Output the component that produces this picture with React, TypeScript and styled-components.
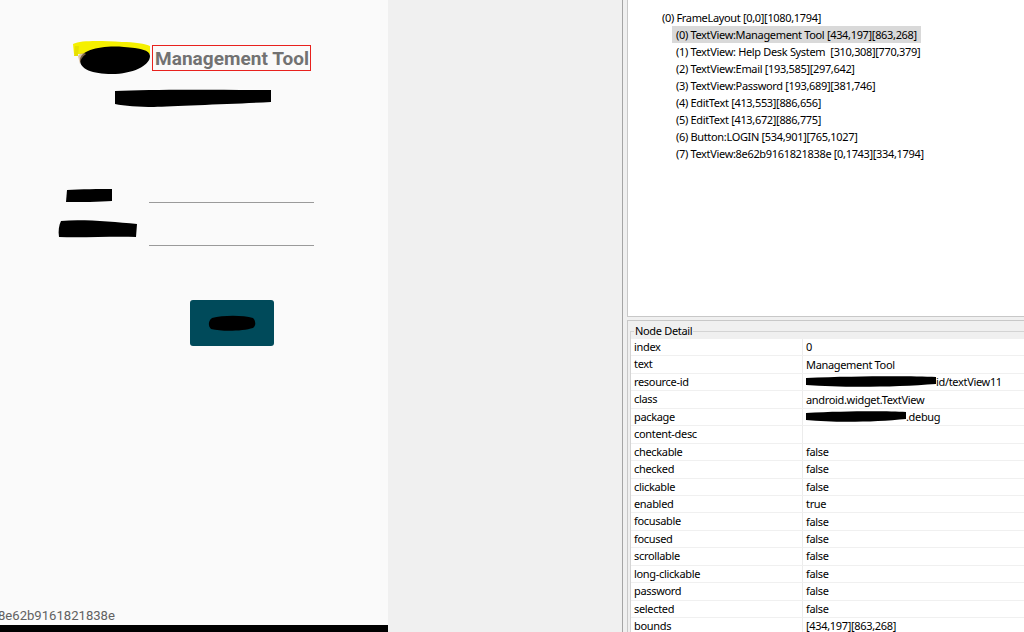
import React from "react";
import styled, { createGlobalStyle } from "styled-components";

const Global = createGlobalStyle`
  html, body { margin: 0; padding: 0; }
  body { width: 1024px; height: 632px; overflow: hidden; background: #f0f0f0; }
  #root { width: 1024px; height: 632px; }
`;

const Screen = styled.div`
  display: flex;
  width: 1024px;
  height: 632px;
  overflow: hidden;
  background: #f0f0f0;
`;

/* ---------- phone mirror ---------- */
const Phone = styled.div`
  width: 388px;
  height: 632px;
  flex: none;
  background: #fafafa;
  display: flex;
  flex-direction: column;
  font-family: Roboto, "Noto Sans", sans-serif;
`;

const TitleRow = styled.div`
  display: flex;
  align-items: center;
  padding: 40px 0 0 72px;
  height: 36px;
`;

const TitleBox = styled.div`
  border: 1px solid #e8211d;
  height: 24px;
  padding: 0 1px 0 2px;
  display: flex;
  align-items: center;
  font-size: 19px;
  font-weight: 700;
  color: #727272;
  letter-spacing: 0.05px;
  line-height: 1;
`;

const SubtitleRow = styled.div`
  padding: 13px 0 0 114px;
  height: 20px;
`;

const Form = styled.div`
  display: flex;
  flex-direction: column;
  padding: 67px 0 0 58px;
`;

const FormRow = styled.div<{ h: number }>`
  display: flex;
  align-items: flex-start;
  height: ${(p) => p.h}px;
`;

const LabelCell = styled.div<{ pt: number }>`
  width: 91px;
  flex: none;
  padding-top: ${(p) => p.pt}px;
`;

const Field = styled.div<{ h: number }>`
  width: 165px;
  height: ${(p) => p.h}px;
  border-bottom: 1.5px solid #9a9a9a;
`;

const ButtonRow = styled.div`
  padding: 53px 0 0 190px;
`;

const LoginButton = styled.div`
  width: 84px;
  height: 46px;
  background: #004a5a;
  border-radius: 3px;
  display: flex;
  align-items: center;
  justify-content: center;
`;

const Footer = styled.div`
  margin-top: auto;
  padding: 0 0 1px 0;
  margin-left: -2px;
  font-size: 13.1px;
  color: #616161;
  line-height: 16px;
  height: 16px;
  white-space: nowrap;
`;

const BottomBar = styled.div`
  height: 7px;
  background: #000;
`;

/* ---------- gutter ---------- */
const Gutter = styled.div`
  flex: 1;
  background: #f0f0f0;
`;

/* ---------- inspector ---------- */
const Inspector = styled.div`
  width: 397px;
  flex: none;
  display: flex;
  flex-direction: column;
  border-left: 1px solid #a5a5a5;
  padding-left: 4px;
  background: #f0f0f0;
  font-family: "Noto Sans", "Open Sans", sans-serif;
  font-size: 11px;
  letter-spacing: -0.33px;
  color: #000;
`;

const TreeBox = styled.div`
  height: 307px;
  flex: none;
  background: #fff;
  border-left: 1px solid #c8c8c8;
  border-bottom: 1px solid #c8c8c8;
  padding: 9px 0 0 34px;
  line-height: 17px;
`;

const TreeNode = styled.div`
  white-space: pre;
`;

const TreeChildren = styled.div`
  margin-left: 10px;
`;

const TreeItem = styled.div<{ selected?: boolean }>`
  display: inline-block;
  white-space: pre;
  padding: 0 4px;
  background: ${(p) => (p.selected ? "#d9d9d9" : "transparent")};
`;

const DetailBox = styled.div`
  flex: 1;
  margin-top: 3px;
  border-top: 1px solid #c8c8c8;
  border-left: 1px solid #c8c8c8;
  padding: 3px 0 0 2px;
  overflow: hidden;
`;

const Group = styled.fieldset`
  margin: 0;
  padding: 0;
  border: 1px solid #d4d4d4;
  border-right: none;
  border-bottom: none;
  min-width: 0;
`;

const Legend = styled.legend`
  margin-left: 3px;
  padding: 0 1px;
  font-size: 11px;
  line-height: 14px;
`;

const Table = styled.div`
  display: flex;
  flex-direction: column;
  padding-top: 1px;
`;

const Row = styled.div`
  display: grid;
  grid-template-columns: 171px 1fr;
  height: 17.44px;
  box-sizing: border-box;
  border-bottom: 1px solid #f0f0f0;
  background: #fff;
  line-height: 16px;
`;

const Key = styled.div`
  padding-left: 3px;
  white-space: nowrap;
`;

const Val = styled.div`
  border-left: 1px solid #ececec;
  padding-left: 3px;
  white-space: nowrap;
  display: flex;
  align-items: center;
`;

/* ---------- drawings (redaction scribbles) ---------- */
const TitleScribble = () => (
  <svg width="80" height="36" viewBox="0 0 80 36" style={{ display: "block", flex: "none" }}>
    <path d="M1 4 C 10 0, 30 1, 50 2 C 62 2, 74 4, 78 6 L 78 14 L 2 14 Z" fill="#f5f000" />
    <path d="M3 6 L 7 6 L 6 16 L 2 16 Z" fill="#e7e000" />
    <path d="M8 20 C 8 10, 30 5, 52 7 C 68 8, 78 10, 78 16 C 78 26, 60 34, 40 34 C 20 34, 8 29, 8 20 Z" fill="#000" />
    <path d="M6 16 C 8 13, 12 12, 14 14 C 10 17, 8 20, 8 24 Z" fill="#c8a070" opacity="0.6" />
  </svg>
);

const SubScribble = () => (
  <svg width="160" height="20" viewBox="0 0 160 20" style={{ display: "block" }}>
    <path d="M1 2 C 40 0, 110 1, 157 1 L 157 13 C 120 15, 60 17, 40 18 C 25 18, 10 17, 1 15 Z" fill="#000" />
  </svg>
);

const EmailScribble = () => (
  <svg width="50" height="16" viewBox="0 0 50 16" style={{ display: "block", marginLeft: 7 }}>
    <path d="M2 2 C 15 1, 35 1, 47 1 L 47 13 C 35 14, 15 14, 1 14 Z" fill="#000" />
  </svg>
);

const PasswordScribble = () => (
  <svg width="80" height="20" viewBox="0 0 80 20" style={{ display: "block" }}>
    <path d="M3 2 C 25 0, 55 3, 79 5 L 78 18 C 55 17, 25 19, 1 18 C 0 12, 1 6, 3 2 Z" fill="#000" />
  </svg>
);

const ButtonScribble = () => (
  <svg width="48" height="17" viewBox="0 0 48 17" style={{ display: "block" }}>
    <path d="M4 3 C 15 0, 35 0, 45 3 C 48 6, 48 11, 45 13 C 35 16, 15 17, 3 14 C 0 11, 0 6, 4 3 Z" fill="#000" />
  </svg>
);

const RedactedValue = ({ width }: { width: number }) => (
  <svg width={width} height="12" viewBox={`0 0 ${width} 12`} style={{ display: "block", flex: "none" }}>
    <path d={`M0 2 C ${width * 0.4} 0, ${width * 0.8} 0, ${width} 1 L ${width} 8 C ${width * 0.7} 11, ${width * 0.3} 12, 0 9 Z`} fill="#000" />
  </svg>
);

const treeItems = [
  "(0) TextView:Management Tool [434,197][863,268]",
  "(1) TextView: Help Desk System  [310,308][770,379]",
  "(2) TextView:Email [193,585][297,642]",
  "(3) TextView:Password [193,689][381,746]",
  "(4) EditText [413,553][886,656]",
  "(5) EditText [413,672][886,775]",
  "(6) Button:LOGIN [534,901][765,1027]",
  "(7) TextView:8e62b9161821838e [0,1743][334,1794]",
];

type Detail = { k: string; v?: string; redact?: number };
const details: Detail[] = [
  { k: "index", v: "0" },
  { k: "text", v: "Management Tool" },
  { k: "resource-id", v: "id/textView11", redact: 130 },
  { k: "class", v: "android.widget.TextView" },
  { k: "package", v: ".debug", redact: 100 },
  { k: "content-desc", v: "" },
  { k: "checkable", v: "false" },
  { k: "checked", v: "false" },
  { k: "clickable", v: "false" },
  { k: "enabled", v: "true" },
  { k: "focusable", v: "false" },
  { k: "focused", v: "false" },
  { k: "scrollable", v: "false" },
  { k: "long-clickable", v: "false" },
  { k: "password", v: "false" },
  { k: "selected", v: "false" },
  { k: "bounds", v: "[434,197][863,268]" },
];

export default function App() {
  return (
    <>
      <Global />
      <Screen>
        <Phone>
          <TitleRow>
            <TitleScribble />
            <TitleBox>Management Tool</TitleBox>
          </TitleRow>
          <SubtitleRow>
            <SubScribble />
          </SubtitleRow>
          <Form>
            <FormRow h={35}>
              <LabelCell pt={12}>
                <EmailScribble />
              </LabelCell>
              <Field h={26} />
            </FormRow>
            <FormRow h={36}>
              <LabelCell pt={8}>
                <PasswordScribble />
              </LabelCell>
              <Field h={34} />
            </FormRow>
          </Form>
          <ButtonRow>
            <LoginButton>
              <ButtonScribble />
            </LoginButton>
          </ButtonRow>
          <Footer>8e62b9161821838e</Footer>
          <BottomBar />
        </Phone>
        <Gutter />
        <Inspector>
          <TreeBox>
            <TreeNode>(0) FrameLayout [0,0][1080,1794]</TreeNode>
            <TreeChildren>
              {treeItems.map((t, i) => (
                <div key={i}>
                  <TreeItem selected={i === 0}>{t}</TreeItem>
                </div>
              ))}
            </TreeChildren>
          </TreeBox>
          <DetailBox>
            <Group>
              <Legend>Node Detail</Legend>
              <Table>
                {details.map((d) => (
                  <Row key={d.k}>
                    <Key>{d.k}</Key>
                    <Val>
                      {d.redact ? <RedactedValue width={d.redact} /> : null}
                      {d.v}
                    </Val>
                  </Row>
                ))}
              </Table>
            </Group>
          </DetailBox>
        </Inspector>
      </Screen>
    </>
  );
}
